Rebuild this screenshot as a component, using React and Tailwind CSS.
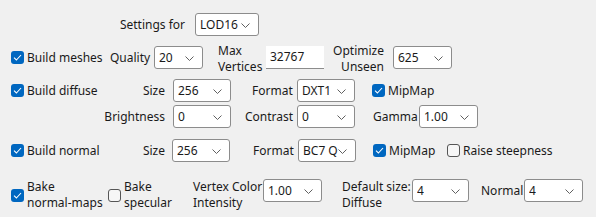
import React from 'react';

const Chevron = () => (
  <svg width="9" height="5" viewBox="0 0 9 5" className="shrink-0 mt-[1px]">
    <path d="M0.5 0.5 L4.5 4.5 L8.5 0.5" fill="none" stroke="#606060" strokeWidth="1" />
  </svg>
);

const Combo = ({ value, w }) => (
  <div className={`${w} h-[23px] shrink-0 bg-white border border-[#8c8c8c] rounded-[3px] flex items-center justify-between pl-[4px] pr-[8px] overflow-hidden`}>
    <span className="whitespace-nowrap overflow-hidden">{value}</span>
    <Chevron />
  </div>
);

const Check = ({ checked }) =>
  checked ? (
    <div className="w-[13px] h-[13px] shrink-0 rounded-[3px] bg-[#0067c0] flex items-center justify-center">
      <svg width="9" height="7" viewBox="0 0 9 7">
        <path d="M1 3.6 L3.4 6 L8 1" fill="none" stroke="white" strokeWidth="1.1" />
      </svg>
    </div>
  ) : (
    <div className="w-[13px] h-[13px] shrink-0 rounded-[3px] border border-[#555] bg-[#f6f6f6]"></div>
  );

const CheckLabel = ({ checked, children }) => (
  <div className="flex items-center gap-[3px]">
    <Check checked={checked} />
    <span className="whitespace-nowrap">{children}</span>
  </div>
);

export default function App() {
  return (
    <div
      className="w-[596px] h-[217px] bg-[#f0f0f0] text-[12px] text-[#1a1a1a] leading-[16px] pt-[13px] flex flex-col"
      style={{ fontFamily: '"Noto Sans", sans-serif' }}
    >
      {/* Settings for */}
      <div className="flex items-center h-[23px]">
        <div className="w-[195px] text-right pr-[10px]">Settings for</div>
        <Combo value="LOD16" w="w-[64px]" />
      </div>

      {/* meshes */}
      <div className="flex items-center h-[23px] mt-[10px]">
        <div className="w-[110px] pl-[11px]">
          <CheckLabel checked>Build meshes</CheckLabel>
        </div>
        <div className="w-[44px]">Quality</div>
        <Combo value="20" w="w-[49px]" />
        <div className="w-[15px]"></div>
        <div className="w-[48px] pt-[2px]">Max<br />Vertices</div>
        <div className="w-[58px] h-[23px] bg-white border-b border-[#8c8c8c] flex items-center pl-[4px]">32767</div>
        <div className="w-[69px] text-right pr-[9px] pt-[2px]">Optimize<br />Unseen</div>
        <Combo value="625" w="w-[59px]" />
      </div>

      {/* diffuse */}
      <div className="flex items-center h-[23px] mt-[10px]">
        <div className="w-[140px] pl-[11px]">
          <CheckLabel checked>Build diffuse</CheckLabel>
        </div>
        <div className="w-[33px] text-right pr-[8px]">Size</div>
        <Combo value="256" w="w-[58px]" />
        <div className="w-[66px] pl-[21px]">Format</div>
        <Combo value="DXT1" w="w-[58px]" />
        <div className="w-[17px]"></div>
        <CheckLabel checked>MipMap</CheckLabel>
      </div>

      <div className="flex items-center h-[23px] mt-[3px]">
        <div className="w-[173px] text-right pr-[8px]">Brightness</div>
        <Combo value="0" w="w-[58px]" />
        <div className="w-[66px] pl-[14px]">Contrast</div>
        <Combo value="0" w="w-[58px]" />
        <div className="w-[64px] pl-[18px]">Gamma</div>
        <Combo value="1.00" w="w-[59px]" />
      </div>

      {/* normal */}
      <div className="flex items-center h-[23px] mt-[11px]">
        <div className="w-[140px] pl-[11px]">
          <CheckLabel checked>Build normal</CheckLabel>
        </div>
        <div className="w-[32px] text-right pr-[7px]">Size</div>
        <Combo value="256" w="w-[58px]" />
        <div className="w-[68px] pl-[23px]">Format</div>
        <Combo value="BC7 Quality" w="w-[58px]" />
        <div className="w-[17px]"></div>
        <div className="w-[74px]">
          <CheckLabel checked>MipMap</CheckLabel>
        </div>
        <CheckLabel>Raise steepness</CheckLabel>
      </div>

      {/* bake */}
      <div className="flex items-start h-[32px] mt-[16px]">
        <div className="w-[108px] pl-[11px] flex items-center gap-[3px] pt-[1px]">
          <Check checked />
          <span>Bake<br />normal-maps</span>
        </div>
        <div className="w-[85px] flex items-center gap-[3px] pt-[1px]">
          <Check />
          <span>Bake<br />specular</span>
        </div>
        <div className="w-[70px] pt-[1px]">Vertex Color<br />Intensity</div>
        <Combo value="1.00" w="w-[59px] mt-[1px]" />
        <div className="w-[90px] pl-[20px] pt-[1px]">Default size:<br />Diffuse</div>
        <Combo value="4" w="w-[57px] mt-[1px]" />
        <div className="w-[55px] pl-[12px] pt-[5px]">Normal</div>
        <Combo value="4" w="w-[59px] mt-[1px]" />
      </div>
    </div>
  );
}
